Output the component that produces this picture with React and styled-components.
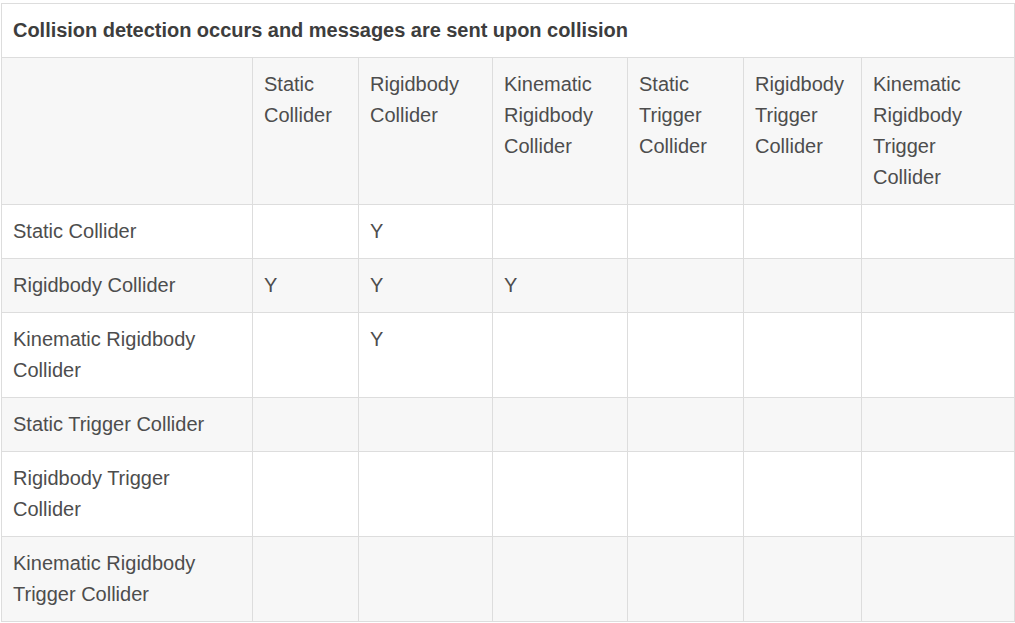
import React from "react";
import styled, { createGlobalStyle } from "styled-components";

const Global = createGlobalStyle`
  html, body { margin: 0; padding: 0; background: #fff; }
  body { font-family: "Liberation Sans", Arial, sans-serif; }
`;

const Page = styled.div`
  padding: 3px 0 0 1px;
`;

const COLS = [251, 106, 134, 135, 116, 118, 153];

const Table = styled.div`
  display: grid;
  grid-template-columns: ${COLS.map((c) => c + "px").join(" ")};
  width: 1014px;
  box-sizing: border-box;
  border-left: 1px solid #dddddd;
  border-top: 1px solid #dddddd;
  color: #4d4d4d;
  font-size: 20px;
  line-height: 31px;
`;

const Caption = styled.div`
  grid-column: 1 / -1;
  box-sizing: border-box;
  padding: 11px 11px;
  border-right: 1px solid #dddddd;
  border-bottom: 1px solid #dddddd;
  background: #ffffff;
  color: #3d3d3d;
  font-weight: bold;
  letter-spacing: -0.03px;
`;

const Cell = styled.div`
  box-sizing: border-box;
  padding: 11px 11px;
  border-right: 1px solid #dddddd;
  border-bottom: 1px solid #dddddd;
  background: ${(p) => (p.$shade ? "#f7f7f7" : "#ffffff")};
`;

const HeadCell = styled(Cell)`
  font-weight: normal;
`;

const headers = [
  "",
  "Static Collider",
  "Rigidbody Collider",
  "Kinematic Rigidbody Collider",
  "Static Trigger Collider",
  "Rigidbody Trigger Collider",
  "Kinematic Rigidbody Trigger Collider",
];

const rows = [
  ["Static Collider", "", "Y", "", "", "", ""],
  ["Rigidbody Collider", "Y", "Y", "Y", "", "", ""],
  ["Kinematic Rigidbody Collider", "", "Y", "", "", "", ""],
  ["Static Trigger Collider", "", "", "", "", "", ""],
  ["Rigidbody Trigger Collider", "", "", "", "", "", ""],
  ["Kinematic Rigidbody Trigger Collider", "", "", "", "", "", ""],
];

export default function App() {
  return (
    <Page>
      <Global />
      <Table>
        <Caption>Collision detection occurs and messages are sent upon collision</Caption>
        {headers.map((h, i) => (
          <HeadCell key={"h" + i} $shade>
            {h}
          </HeadCell>
        ))}
        {rows.map((r, ri) =>
          r.map((c, ci) => (
            <Cell key={ri + "-" + ci} $shade={ri % 2 === 1}>
              {c}
            </Cell>
          ))
        )}
      </Table>
    </Page>
  );
}
